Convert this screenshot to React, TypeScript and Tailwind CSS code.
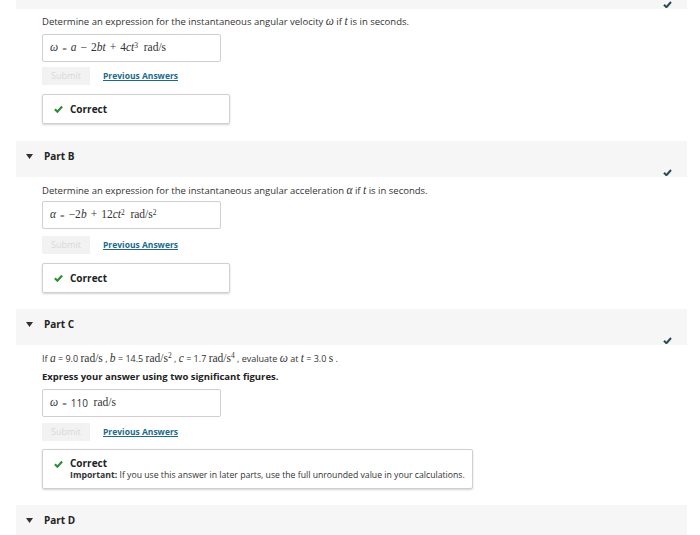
import type { ReactNode } from 'react';

const FONT = { fontFamily: '"Open Sans", "Liberation Sans", sans-serif' };
const MATH = { fontFamily: '"Liberation Serif", "DejaVu Serif", serif' };

function HeaderCheck() {
  return (
    <svg className="absolute right-[15px] bottom-[1px] w-[9px] h-[7px]" viewBox="0 0 10 8">
      <path d="M1 4.2 L3.8 7 L9 1.2" fill="none" stroke="#2a4a59" strokeWidth={2.4} />
    </svg>
  );
}

function PartHeader({ label, done = true }: { label: string; done?: boolean }) {
  return (
    <div className="relative ml-[16px] w-[671px] h-[36px] shrink-0 bg-[#f6f6f6] flex items-center pb-[6px]">
      <svg className="ml-[10px] w-[7px] h-[5px]" viewBox="0 0 7 5">
        <path d="M0 0 H7 L3.5 5 Z" fill="#333" />
      </svg>
      <span className="ml-[11px] text-[10px] font-bold text-[#222]">{label}</span>
      {done && <HeaderCheck />}
    </div>
  );
}

function AnswerBox({ children }: { children: ReactNode }) {
  return (
    <div className="w-[179px] h-[28px] border border-[#cfcfcf] rounded-[2px] flex items-center px-[7px] text-[10px] text-[#333]">
      {children}
    </div>
  );
}

function SubmitRow() {
  return (
    <div className="flex items-center h-[18px]">
      <div className="w-[48px] h-[18px] bg-[#f2f2f2] text-[#d8d8d8] text-[9px] flex items-center justify-center">
        Submit
      </div>
      <span className="ml-[13px] text-[8.5px] font-bold text-[#1d6a8a] underline">Previous Answers</span>
    </div>
  );
}

function Correct({ wide }: { wide?: boolean }) {
  return (
    <div
      className={
        'border border-[#d0d0d0] rounded-[2px] shadow-[0_1px_2px_rgba(0,0,0,0.18)] flex pl-[11px] ' +
        (wide ? 'w-[431px] h-[40px] pt-[7px] items-start' : 'w-[188px] h-[30px] items-center')
      }
    >
      <svg className={'w-[9px] h-[8px] shrink-0 ' + (wide ? 'mt-[3px]' : '')} viewBox="0 0 10 8">
        <path d="M1 4.2 L3.8 7 L9 1.2" fill="none" stroke="#2e8b3a" strokeWidth={2.4} />
      </svg>
      <div className="ml-[7px] leading-[12px]">
        <div className="text-[10px] font-bold text-[#222]">Correct</div>
        {wide && (
          <div className="text-[8.7px] text-[#333]">
            <span className="font-bold">Important:</span> If you use this answer in later parts, use the full unrounded value in your calculations.
          </div>
        )}
      </div>
    </div>
  );
}

function M({ children }: { children: ReactNode }) {
  return <span style={MATH} className="text-[11.5px]">{children}</span>;
}

function Sup({ children }: { children: ReactNode }) {
  return <sup className="text-[7.5px]">{children}</sup>;
}

function Op({ c }: { c: string }) {
  return <span className="mx-[4px]">{c}</span>;
}

function Eq() {
  return <span className="text-[8px] mx-[4px]">=</span>;
}

export default function App() {
  return (
    <div style={FONT} className="w-[700px] h-[535px] bg-white overflow-hidden text-[#333] flex flex-col">
      {/* tail of Part A header */}
      <div className="relative ml-[16px] w-[671px] h-[9px] shrink-0 bg-[#f6f6f6]">
        <HeaderCheck />
      </div>

      <div className="ml-[42px] pt-[6px] pb-[17px] flex flex-col">
        <p className="h-[12px] text-[9.5px] leading-[12px] whitespace-nowrap">
          Determine an expression for the instantaneous angular velocity <M><i>ω</i></M> if <M><i>t</i></M> is in seconds.
        </p>
        <div className="mt-[7px]">
          <AnswerBox>
            <M><i>ω</i></M>
            <Eq />
            <M>
              <i>a</i><Op c="−" />2<i>bt</i><Op c="+" />4<i>ct</i><Sup>3</Sup>&nbsp;&nbsp;rad/s
            </M>
          </AnswerBox>
        </div>
        <div className="mt-[5px]"><SubmitRow /></div>
        <div className="mt-[9px]"><Correct /></div>
      </div>

      <PartHeader label="Part B" />
      <div className="ml-[42px] pt-[7px] pb-[16px] flex flex-col">
        <p className="h-[12px] text-[9.5px] leading-[12px] whitespace-nowrap">
          Determine an expression for the instantaneous angular acceleration <M><i>α</i></M> if <M><i>t</i></M> is in seconds.
        </p>
        <div className="mt-[5px]">
          <AnswerBox>
            <M><i>α</i></M>
            <Eq />
            <M>
              −2<i>b</i><Op c="+" />12<i>ct</i><Sup>2</Sup>&nbsp;&nbsp;rad/s<Sup>2</Sup>
            </M>
          </AnswerBox>
        </div>
        <div className="mt-[7px]"><SubmitRow /></div>
        <div className="mt-[9px]"><Correct /></div>
      </div>

      <PartHeader label="Part C" />
      <div className="ml-[42px] pt-[7px] pb-[16px] flex flex-col">
        <p className="h-[12px] text-[9px] leading-[12px] whitespace-nowrap">
          If <M><i>a</i></M> = 9.0 <M>rad/s</M> , <M><i>b</i></M> = 14.5 <M>rad/s<Sup>2</Sup></M> , <M><i>c</i></M> = 1.7{' '}
          <M>rad/s<Sup>4</Sup></M> , evaluate <M><i>ω</i></M> at <M><i>t</i></M> = 3.0 <M>s</M> .
        </p>
        <p className="mt-[7px] h-[12px] text-[9.5px] leading-[12px] font-bold text-[#222]">
          Express your answer using two significant figures.
        </p>
        <div className="mt-[6px]">
          <AnswerBox>
            <M><i>ω</i></M>
            <Eq />
            <span className="text-[10px]">110</span>
            <M>&nbsp;&nbsp;rad/s</M>
          </AnswerBox>
        </div>
        <div className="mt-[6px]"><SubmitRow /></div>
        <div className="mt-[8px]"><Correct wide /></div>
      </div>

      <PartHeader label="Part D" done={false} />
    </div>
  );
}
